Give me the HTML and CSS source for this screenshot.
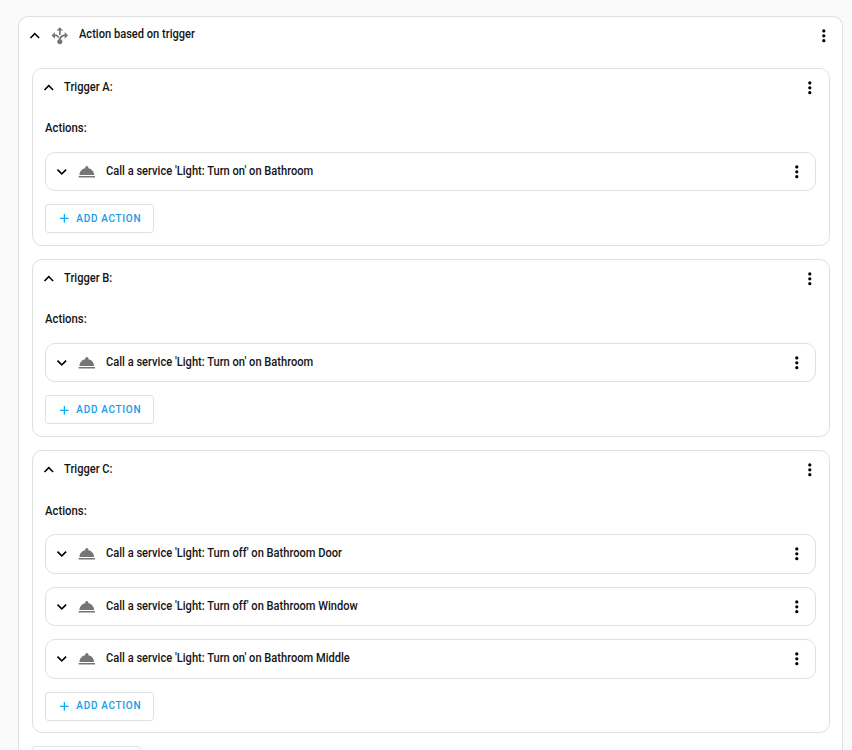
FILE: index.html
```
<!DOCTYPE html>
<html lang="en">
<head>
<meta charset="utf-8">
<title>Action based on trigger</title>
<link rel="stylesheet" href="styles.css">
</head>
<body>
<svg class="defs" aria-hidden="true">
  <symbol id="up" viewBox="0 0 24 24"><path d="M7.41,15.41L12,10.83L16.59,15.41L18,14L12,8L6,14L7.41,15.41Z"/></symbol>
  <symbol id="down" viewBox="0 0 24 24"><path d="M7.41,8.58L12,13.17L16.59,8.58L18,10L12,16L6,10L7.41,8.58Z"/></symbol>
  <symbol id="dots" viewBox="0 0 24 24"><path d="M12,16A2,2 0 0,1 14,18A2,2 0 0,1 12,20A2,2 0 0,1 10,18A2,2 0 0,1 12,16M12,10A2,2 0 0,1 14,12A2,2 0 0,1 12,14A2,2 0 0,1 10,12A2,2 0 0,1 12,10M12,4A2,2 0 0,1 14,6A2,2 0 0,1 12,8A2,2 0 0,1 10,6A2,2 0 0,1 12,4Z"/></symbol>
  <symbol id="bell" viewBox="0 0 24 24"><path d="M12,5A2,2 0 0,1 14,7C14,7.24 13.96,7.47 13.88,7.69C17.95,8.5 21,11.91 21,16H3C3,11.91 6.05,8.5 10.12,7.69C10.04,7.47 10,7.24 10,7A2,2 0 0,1 12,5M22,19H2V17H22V19Z"/></symbol>
  <symbol id="plus" viewBox="0 0 24 24"><path d="M19,13H13V19H11V13H5V11H11V5H13V11H19V13Z"/></symbol>
  <symbol id="choose" viewBox="0 0 24 24"><path d="M12 1.500L16 5.500H13V11H11V5.500H8ZM2 11.500L6 7.500V10.500H7.500C9 10.700 10.300 11.800 11.200 13.300L10.200 15.200C9.400 13.500 8.500 12.700 7 12.500H6V15.500ZM22 11.500L18 15.500V12.500C15.500 12.700 13.600 14.300 13.200 16.300A3.200 3.200 0 1 1 10.900 16.300C11.400 13.200 14.300 10.500 18 10.500V7.500Z"/></symbol>
</svg>
<main class="card outer">
  <header class="head outer-head">
    <svg class="icon"><use href="#up"/></svg>
    <svg class="icon muted"><use href="#choose"/></svg>
    <span class="title">Action based on trigger</span>
    <svg class="icon menu"><use href="#dots"/></svg>
  </header>

  <section class="card option">
    <header class="head"><svg class="icon"><use href="#up"/></svg><span class="title">Trigger A:</span><svg class="icon menu"><use href="#dots"/></svg></header>
    <h3 class="label">Actions:</h3>
    <div class="card row"><svg class="icon"><use href="#down"/></svg><svg class="icon muted"><use href="#bell"/></svg><span class="title">Call a service 'Light: Turn on' on Bathroom</span><svg class="icon menu"><use href="#dots"/></svg></div>
    <button class="add"><svg class="plus"><use href="#plus"/></svg><span>ADD ACTION</span></button>
  </section>

  <section class="card option">
    <header class="head"><svg class="icon"><use href="#up"/></svg><span class="title">Trigger B:</span><svg class="icon menu"><use href="#dots"/></svg></header>
    <h3 class="label">Actions:</h3>
    <div class="card row"><svg class="icon"><use href="#down"/></svg><svg class="icon muted"><use href="#bell"/></svg><span class="title">Call a service 'Light: Turn on' on Bathroom</span><svg class="icon menu"><use href="#dots"/></svg></div>
    <button class="add"><svg class="plus"><use href="#plus"/></svg><span>ADD ACTION</span></button>
  </section>

  <section class="card option">
    <header class="head"><svg class="icon"><use href="#up"/></svg><span class="title">Trigger C:</span><svg class="icon menu"><use href="#dots"/></svg></header>
    <h3 class="label">Actions:</h3>
    <div class="card row"><svg class="icon"><use href="#down"/></svg><svg class="icon muted"><use href="#bell"/></svg><span class="title">Call a service 'Light: Turn off' on Bathroom Door</span><svg class="icon menu"><use href="#dots"/></svg></div>
    <div class="card row"><svg class="icon"><use href="#down"/></svg><svg class="icon muted"><use href="#bell"/></svg><span class="title">Call a service 'Light: Turn off' on Bathroom Window</span><svg class="icon menu"><use href="#dots"/></svg></div>
    <div class="card row"><svg class="icon"><use href="#down"/></svg><svg class="icon muted"><use href="#bell"/></svg><span class="title">Call a service 'Light: Turn on' on Bathroom Middle</span><svg class="icon menu"><use href="#dots"/></svg></div>
    <button class="add"><svg class="plus"><use href="#plus"/></svg><span>ADD ACTION</span></button>
  </section>

  <button class="add" aria-label="Add option"></button>
</main>
</body>
</html>
```
FILE: styles.css
```
* { box-sizing: border-box; }
html { height: 100%; overflow: hidden; }
body {
  height: 750px;
  margin: 0;
  padding: 15.6px 9.2px 0 18.3px;
  overflow: hidden;
  background: #fafafa;
  color: #141414;
  font: 500 12px/18px Roboto, sans-serif;
}
.defs { position: absolute; width: 0; height: 0; }
.card {
  border: 1px solid #e0e0e0;
  border-radius: 10px;
  background: #fff;
}
.outer { height: 734.4px; padding: 0 12.1px 0 12.4px; border-bottom: 0; border-radius: 10px 10px 0 0; overflow: hidden; }
.head, .row { display: flex; align-items: center; height: 38px; }
.outer-head { margin: 0 -12.1px 13px -12.4px; }
.outer-head, .option > .head { padding: 0 8.6px 0 6px; }
.option > .head { padding-right: 9.2px; }
.icon { flex: none; width: 19.6px; height: 19.6px; fill: #000; }
.muted { margin-left: 5.6px; fill: #757575; }
.title { margin-left: 6px; padding-bottom: 1.6px; transform: scaleX(.925); transform-origin: 0 50%; }
.muted + .title { margin-left: 8.5px; }
.row .muted + .title { margin-left: 9.1px; }
.outer-head .title { padding-bottom: 2.6px; }
.menu { margin-left: auto; }
.option { height: 178px; margin-bottom: 13.3px; }
.option:last-of-type { height: 283.2px; margin-bottom: 12.8px; }
.label { margin: 12.5px 12.3px 14.5px; font-size: 12px; line-height: 18px; font-weight: 500; transform: scaleX(.945); transform-origin: 0 50%; }
.row { height: 39.6px; margin: 0 12.3px 13px; padding: 0 9px 0 6px; }
.add {
  display: flex;
  align-items: center;
  width: 109px;
  height: 29px;
  padding: 0 0 0 11px;
  border: 1px solid #e0e0e0;
  border-radius: 3.3px;
  background: #fff;
  color: #129ce8;
  font: 500 10px/16px Roboto, sans-serif;
  letter-spacing: .68px;
}
.option .add { margin-left: 12.3px; }
.plus { width: 14.7px; height: 14.7px; margin-right: 4.7px; fill: #03a9f4; }
```
